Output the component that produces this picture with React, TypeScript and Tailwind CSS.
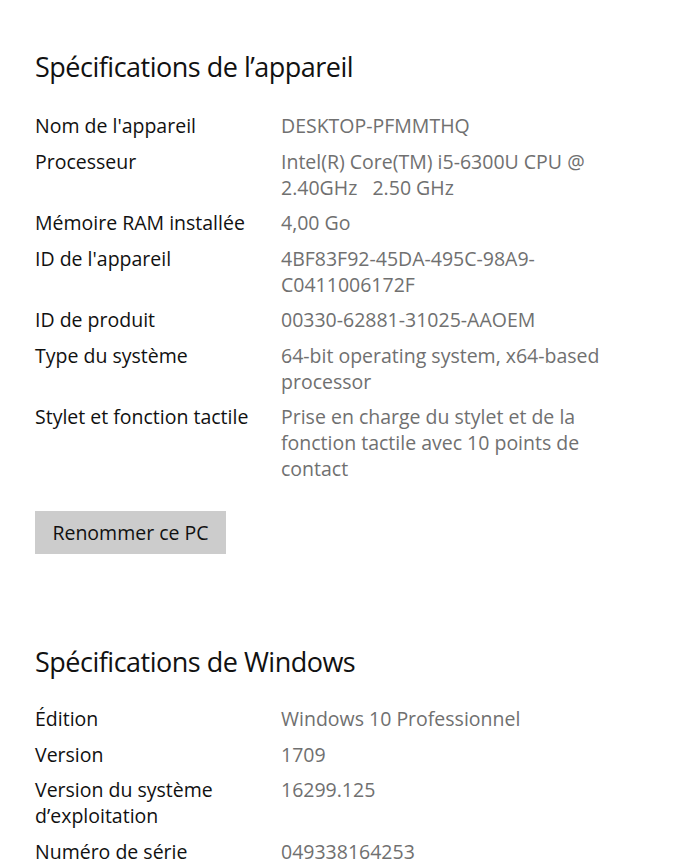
import React from "react";

type Row = { label: string[]; value: string[] };

const device: Row[] = [
  { label: ["Nom de l'appareil"], value: ["DESKTOP-PFMMTHQ"] },
  { label: ["Processeur"], value: ["Intel(R) Core(TM) i5-6300U CPU @", "2.40GHz   2.50 GHz"] },
  { label: ["Mémoire RAM installée"], value: ["4,00 Go"] },
  { label: ["ID de l'appareil"], value: ["4BF83F92-45DA-495C-98A9-", "C0411006172F"] },
  { label: ["ID de produit"], value: ["00330-62881-31025-AAOEM"] },
  { label: ["Type du système"], value: ["64-bit operating system, x64-based", "processor"] },
  {
    label: ["Stylet et fonction tactile"],
    value: ["Prise en charge du stylet et de la", "fonction tactile avec 10 points de", "contact"],
  },
];

const windows: Row[] = [
  { label: ["Édition"], value: ["Windows 10 Professionnel"] },
  { label: ["Version"], value: ["1709"] },
  { label: ["Version du système", "d’exploitation"], value: ["16299.125"] },
  { label: ["Numéro de série"], value: ["049338164253"] },
];

function Rows({ rows }: { rows: Row[] }) {
  return (
    <div className="flex flex-col gap-[9.5px]">
      {rows.map((r, i) => (
        <div key={i} className="flex">
          <div className="w-[246px] shrink-0 text-[#111111]">
            {r.label.map((l, j) => (
              <div key={j} className="whitespace-pre">
                {l}
              </div>
            ))}
          </div>
          <div className="text-[#707070]">
            {r.value.map((v, j) => (
              <div key={j} className="whitespace-pre">
                {v}
              </div>
            ))}
          </div>
        </div>
      ))}
    </div>
  );
}

export default function App() {
  return (
    <div
      className="w-[673px] h-[868px] overflow-hidden bg-white pl-[35px] pt-[49px] text-[19.5px] leading-[26px]"
      style={{ fontFamily: '"Open Sans", "Noto Sans", sans-serif' }}
    >
      <h2 className="text-[27px] leading-[36px] tracking-[-0.5px] text-[#111111]">Spécifications de l’appareil</h2>
      <div className="mt-[28px]">
        <Rows rows={device} />
      </div>
      <button className="mt-[29px] flex h-[43px] w-[191px] items-center justify-center bg-[#cccccc] text-[#111111]">
        Renommer ce PC
      </button>
      <h2 className="mt-[90px] text-[27px] leading-[36px] tracking-[-0.5px] text-[#111111]">Spécifications de Windows</h2>
      <div className="mt-[26px]">
        <Rows rows={windows} />
      </div>
    </div>
  );
}
